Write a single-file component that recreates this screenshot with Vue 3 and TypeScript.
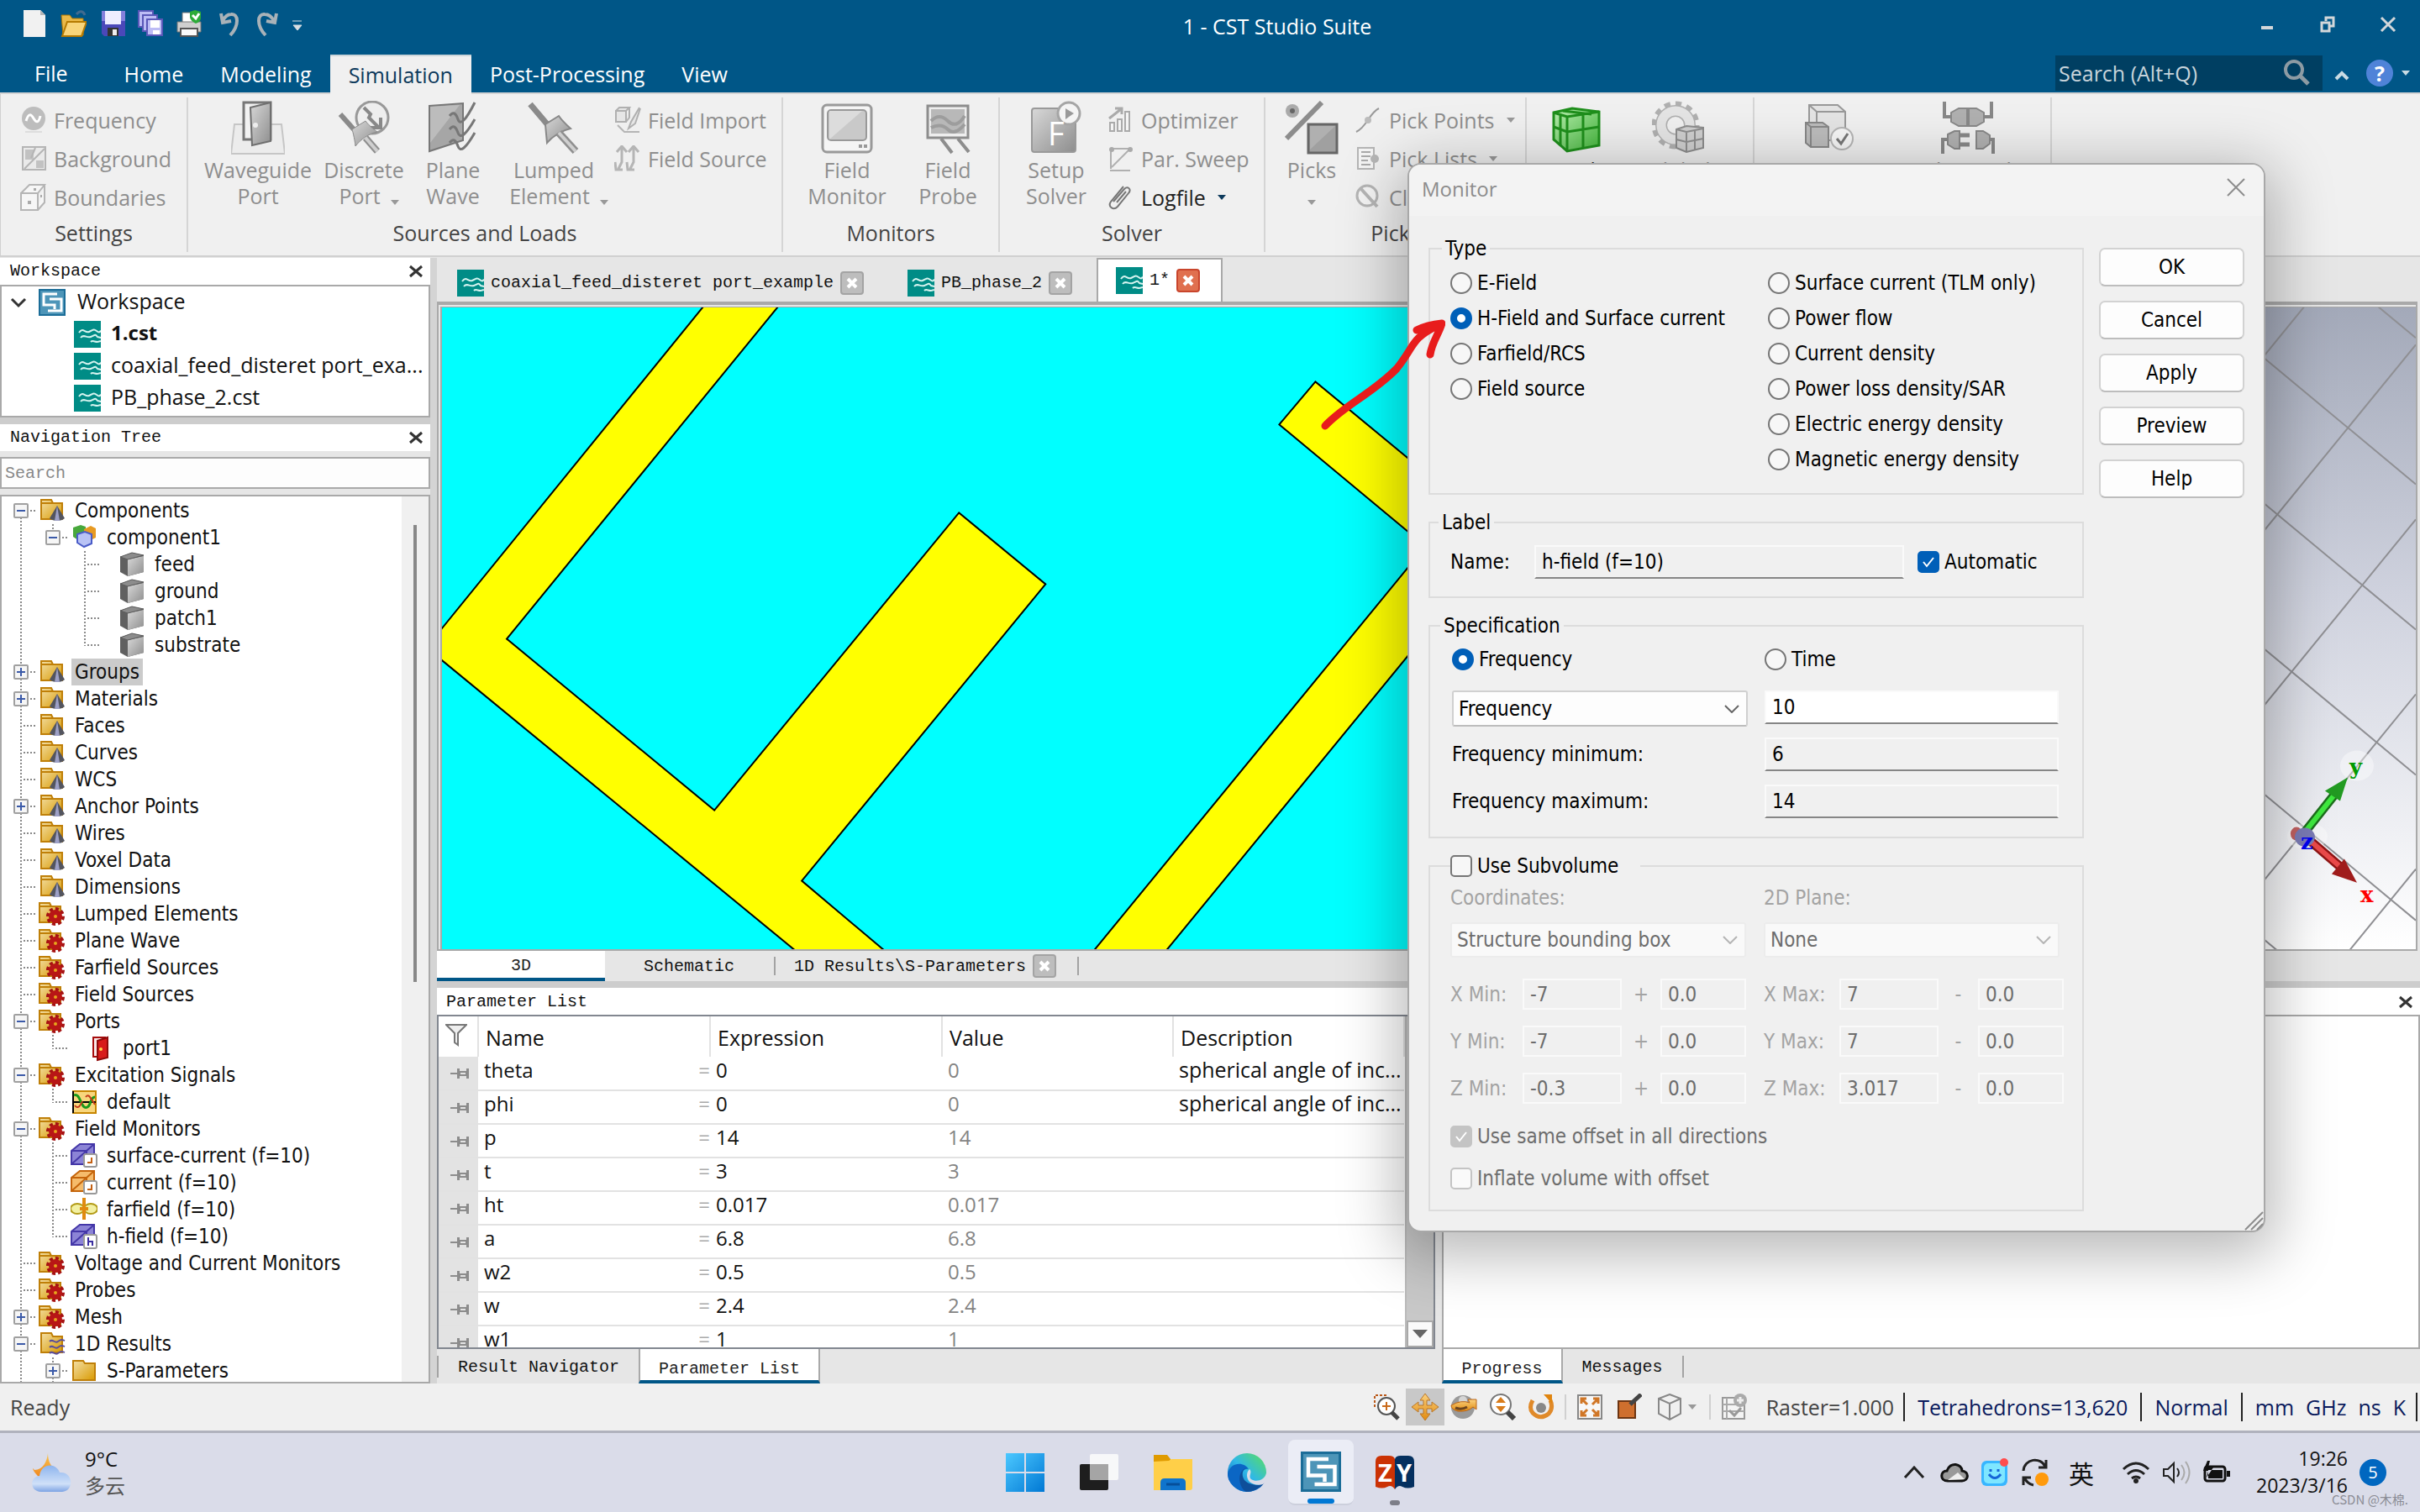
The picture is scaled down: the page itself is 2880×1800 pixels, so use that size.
<script setup lang="ts">
import { ref } from 'vue'

interface SmallItem { icon: string; text: string; on?: boolean; caret?: boolean }
interface BigItem { icon: string; lines: string[]; width: number; caret?: boolean; on?: boolean }
interface Group { name: string; width: number; pad: number; big: BigItem[]; small: SmallItem[] }
interface TreeRow { label: string; icon: string; cells: string[]; box?: '+' | '-'; leaf?: boolean; selected?: boolean }

const quick = ['q-new', 'q-open', 'q-save', 'q-saveall', 'q-print', 'q-undo', 'q-redo']
const tabs = ['File', 'Home', 'Modeling', 'Simulation', 'Post-Processing', 'View']

const groups: Group[] = [
  { name: 'Settings', width: 223, pad: 23, big: [], small: [
    { icon: 'r-freq', text: 'Frequency' }, { icon: 'r-back', text: 'Background' }, { icon: 'r-bound', text: 'Boundaries' }] },
  { name: 'Sources and Loads', width: 708, pad: 15, big: [
    { icon: 'r-wave', lines: ['Waveguide', 'Port'], width: 136 },
    { icon: 'r-disc', lines: ['Discrete', 'Port'], width: 116, caret: true },
    { icon: 'r-plane', lines: ['Plane', 'Wave'], width: 96 },
    { icon: 'r-lump', lines: ['Lumped', 'Element'], width: 144, caret: true }],
    small: [{ icon: 'r-fimp', text: 'Field Import' }, { icon: 'r-fsrc', text: 'Field Source' }] },
  { name: 'Monitors', width: 258, pad: 16, big: [
    { icon: 'r-fmon', lines: ['Field', 'Monitor'], width: 120 },
    { icon: 'r-fprobe', lines: ['Field', 'Probe'], width: 120 }], small: [] },
  { name: 'Solver', width: 316, pad: 6, big: [
    { icon: 'r-setup', lines: ['Setup', 'Solver'], width: 122 }],
    small: [{ icon: 'r-opt', text: 'Optimizer' }, { icon: 'r-sweep', text: 'Par. Sweep' }, { icon: 'r-log', text: 'Logfile', on: true, caret: true }] },
  { name: 'Picks', width: 311, pad: 3, big: [
    { icon: 'r-picks', lines: ['Picks', ''], width: 104, caret: true }],
    small: [{ icon: 'r-ppts', text: 'Pick Points', caret: true }, { icon: 'r-plist', text: 'Pick Lists', caret: true }, { icon: 'r-clear', text: 'Clear Picks' }] },
  { name: 'Mesh', width: 271, pad: 0, big: [
    { icon: 'r-mesh', lines: ['Mesh', 'View'], width: 118, on: true },
    { icon: 'r-global', lines: ['Global', 'Properties'], width: 126 }], small: [] },
  { name: 'Check', width: 354, pad: 8, big: [
    { icon: 'r-inter', lines: ['Intersection', 'Check'], width: 164 },
    { icon: 'r-elec', lines: ['Electrical', 'Connections'], width: 164 }], small: [] },
]

const files = [
  { name: '1.cst', current: true },
  { name: 'coaxial_feed_disteret port_exa...', current: false },
  { name: 'PB_phase_2.cst', current: false },
]

const tree: TreeRow[] = [
  { label: 'Components', icon: 't-cone', cells: ['first'], box: '-' },
  { label: 'component1', icon: 't-comp', cells: ['v', 'l'], box: '-' },
  { label: 'feed', icon: 't-solid', cells: ['v', '', 't'], leaf: true },
  { label: 'ground', icon: 't-solid', cells: ['v', '', 't'], leaf: true },
  { label: 'patch1', icon: 't-solid', cells: ['v', '', 't'], leaf: true },
  { label: 'substrate', icon: 't-solid', cells: ['v', '', 'l'], leaf: true },
  { label: 'Groups', icon: 't-cone', cells: ['t'], box: '+', selected: true },
  { label: 'Materials', icon: 't-cone', cells: ['t'], box: '+' },
  { label: 'Faces', icon: 't-cone', cells: ['t'] },
  { label: 'Curves', icon: 't-cone', cells: ['t'] },
  { label: 'WCS', icon: 't-cone', cells: ['t'] },
  { label: 'Anchor Points', icon: 't-cone', cells: ['t'], box: '+' },
  { label: 'Wires', icon: 't-cone', cells: ['t'] },
  { label: 'Voxel Data', icon: 't-cone', cells: ['t'] },
  { label: 'Dimensions', icon: 't-cone', cells: ['t'] },
  { label: 'Lumped Elements', icon: 't-gear', cells: ['t'] },
  { label: 'Plane Wave', icon: 't-gear', cells: ['t'] },
  { label: 'Farfield Sources', icon: 't-gear', cells: ['t'] },
  { label: 'Field Sources', icon: 't-gear', cells: ['t'] },
  { label: 'Ports', icon: 't-gear', cells: ['t'], box: '-' },
  { label: 'port1', icon: 't-port', cells: ['v', 'l'], leaf: true },
  { label: 'Excitation Signals', icon: 't-gear', cells: ['t'], box: '-' },
  { label: 'default', icon: 't-signal', cells: ['v', 'l'] },
  { label: 'Field Monitors', icon: 't-gear', cells: ['t'], box: '-' },
  { label: 'surface-current (f=10)', icon: 't-surf', cells: ['v', 't'] },
  { label: 'current (f=10)', icon: 't-curr', cells: ['v', 't'] },
  { label: 'farfield (f=10)', icon: 't-far', cells: ['v', 't'] },
  { label: 'h-field (f=10)', icon: 't-hf', cells: ['v', 'l'] },
  { label: 'Voltage and Current Monitors', icon: 't-gear', cells: ['t'] },
  { label: 'Probes', icon: 't-gear', cells: ['t'] },
  { label: 'Mesh', icon: 't-gear', cells: ['t'], box: '+' },
  { label: '1D Results', icon: 't-1d', cells: ['t'], box: '-' },
  { label: 'S-Parameters', icon: 't-folder', cells: ['v', 't'], box: '+' },
]

const docs = [
  { name: 'coaxial_feed_disteret port_example', active: false },
  { name: 'PB_phase_2', active: false },
  { name: '1*', active: true },
]

const params = [
  ['theta', '0', 'spherical angle of inc...'],
  ['phi', '0', 'spherical angle of inc...'],
  ['p', '14', ''],
  ['t', '3', ''],
  ['ht', '0.017', ''],
  ['a', '6.8', ''],
  ['w2', '0.5', ''],
  ['w', '2.4', ''],
  ['w1', '1', ''],
]

const leftTypes = ['E-Field', 'H-Field and Surface current', 'Farfield/RCS', 'Field source']
const rightTypes = ['Surface current (TLM only)', 'Power flow', 'Current density', 'Power loss density/SAR', 'Electric energy density', 'Magnetic energy density']
const monitorType = ref('H-Field and Surface current')
const domain = ref('Frequency')
const actions = ['OK', 'Cancel', 'Apply', 'Preview', 'Help']
const bounds = [
  { axis: 'X', min: '-7', max: '7' },
  { axis: 'Y', min: '-7', max: '7' },
  { axis: 'Z', min: '-0.3', max: '3.017' },
]

const fallLines = [253, 427, 600, 773, 946, 1119]
const riseLines = [421, 629, 837, 1045, 1253]
const statusTools = ['s-zoomrect', 's-pan', 's-rotate', 's-zoom', 's-spin', '|', 's-fit', 's-plane', 's-cube', '|', 's-sheet']
</script>

<template>
  <div class="app">
    <svg class="sprite" aria-hidden="true">
      <defs>
        <linearGradient id="gGray" x1="0" y1="0" x2="1" y2="1"><stop offset="0" stop-color="#d8d8d8" /><stop offset="1" stop-color="#8e8e8e" /></linearGradient>
        <linearGradient id="gFolder" x1="0" y1="0" x2="1" y2="1"><stop offset="0" stop-color="#f3dfa6" /><stop offset="1" stop-color="#d99a00" /></linearGradient>
        <linearGradient id="gGreen" x1="0" y1="0" x2="1" y2="1"><stop offset="0" stop-color="#b9eeb0" /><stop offset="1" stop-color="#43b53b" /></linearGradient>
        <linearGradient id="gOrange" x1="0" y1="0" x2="0" y2="1"><stop offset="0" stop-color="#fbd27f" /><stop offset="1" stop-color="#e08a10" /></linearGradient>
        <linearGradient id="gWin" x1="0" y1="0" x2="1" y2="1"><stop offset="0" stop-color="#4cc8ff" /><stop offset="1" stop-color="#0078d4" /></linearGradient>
        <linearGradient id="gEdge" x1="0" y1="1" x2="1" y2="0"><stop offset="0" stop-color="#0a5cb8" /><stop offset=".5" stop-color="#2fb8e8" /><stop offset="1" stop-color="#5be05a" /></linearGradient>
        <linearGradient id="gCloud" x1="0" y1="0" x2="0" y2="1"><stop offset="0" stop-color="#8db4ee" /><stop offset=".7" stop-color="#cfe0f8" /><stop offset="1" stop-color="#7ea4e4" /></linearGradient>
        <linearGradient id="gMoon" x1="0" y1="0" x2="0" y2="1"><stop offset="0" stop-color="#f9c64f" /><stop offset="1" stop-color="#ef7f1a" /></linearGradient>
        <linearGradient id="gSky" x1="0" y1="0" x2="0" y2="1"><stop offset="0" stop-color="#a3a9b9" /><stop offset=".45" stop-color="#cfd2de" /><stop offset="1" stop-color="#ffffff" /></linearGradient>
      </defs>
      <symbol id="q-new" viewBox="0 0 32 32"><path d="M3 0h20l6 6v26H3z" fill="#f1f1f1" /><path d="M23 0v6h6z" fill="#b5b5b5" /></symbol>
      <symbol id="q-open" viewBox="0 0 32 32"><path d="M2 6h10l3 4h13v20H4z" fill="#e9b949" stroke="#b57a00" /><path d="M9 14h23l-6 17H3z" fill="#f8d57a" stroke="#b57a00" stroke-width="2" /><path d="M20 5c4-5 8-4 10 1" fill="none" stroke="#426b8f" stroke-width="3" /></symbol>
      <symbol id="q-save" viewBox="0 0 32 32"><path d="M4 1h28v30H7l-3-3z" fill="#4b48b9" /><path d="M4 1h28v12H4z" fill="#8380dc" /><rect x="8" y="1" width="19" height="16" fill="#eef" /><rect x="11" y="21" width="13" height="10" fill="#333" /><rect x="17" y="23" width="5" height="7" fill="#eee" /></symbol>
      <symbol id="q-saveall" viewBox="0 0 32 32"><g fill="#bdbcf5" stroke="#5a57b8" stroke-width="2"><rect x="2" y="1" width="17" height="19" /><rect x="7" y="6" width="17" height="19" /><rect x="12" y="11" width="18" height="19" /></g><rect x="16" y="12" width="11" height="9" fill="#fff" /><rect x="19" y="24" width="8" height="5" fill="#fff" /></symbol>
      <symbol id="q-print" viewBox="0 0 32 32"><path d="M8 3h16v12H8z" fill="#fff" stroke="#777" /><path d="M2 14h28v12H2z" fill="#cfcfcf" stroke="#777" /><path d="M6 22h20v9H6z" fill="#fafafa" stroke="#555" stroke-width="2" /><path d="M17 2l6-2 7 2v7c0 4-3 6-6 7-4-2-7-5-7-8z" fill="#2cab38" /><path d="M20 6l4 4 4-6" fill="none" stroke="#fff" stroke-width="3" /></symbol>
      <symbol id="q-undo" viewBox="0 0 32 32"><path d="M19 30C30 18 29 4 20 5c-5 0-8 4-10 8M8 4l2 11 10-2" fill="none" stroke="#a9b2b8" stroke-width="4" /></symbol>
      <symbol id="q-redo" viewBox="0 0 32 32"><path d="M15 30C4 18 5 4 14 5c5 0 9 4 11 8M28 4l-2 11-10-2" fill="none" stroke="#a9b2b8" stroke-width="4" /></symbol>

      <symbol id="r-freq" viewBox="0 0 32 32"><circle cx="16" cy="14" r="14" fill="#bdbdbd" /><path d="M7 17c3-10 6-8 9-3s6 6 8-3" fill="none" stroke="#fff" stroke-width="3" /><rect x="6" y="29" width="20" height="2" fill="#ddd" /></symbol>
      <symbol id="r-back" viewBox="0 0 32 32"><rect x="3" y="2" width="27" height="27" fill="#eaeaea" stroke="#b5b5b5" stroke-width="2" /><path d="M6 5h10v12H6zM19 18h9v9h-9z" fill="#c2c2c2" /><path d="M5 28L29 4M18 3l-5 12" stroke="#b5b5b5" stroke-width="2" /></symbol>
      <symbol id="r-bound" viewBox="0 0 32 32"><path d="M1 11h20v20H1zM1 11L11 1h18l-8 10M21 31l8-9V1" fill="#f6f6f6" stroke="#b5b5b5" stroke-width="2" /><path d="M9 20h4v4H9zM16 5h3v3h-3zM24 13h2v3h-2z" fill="#aaa" /></symbol>
      <symbol id="r-wave" viewBox="0 0 64 64"><path d="M4 28h56l4 35H0z" fill="#ececec" stroke="#c6c6c6" stroke-width="2" /><path d="M15 2h32v44H15z" fill="#f2f2f2" stroke="#777" stroke-width="3" /><path d="M23 8l24-6v46l-22 5z" fill="url(#gGray)" stroke="#6f6f6f" stroke-width="2" /><circle cx="29" cy="29" r="3" fill="#eee" /></symbol>
      <symbol id="r-disc" viewBox="0 0 64 64"><circle cx="42" cy="20" r="19" fill="#eee" stroke="#999" stroke-width="3" /><path d="M32 8l8 8-2 4 12 12M52 20v12H40" fill="none" stroke="#888" stroke-width="4" /><path d="M4 16l16 18" stroke="#8a8a8a" stroke-width="6" /><path d="M22 54c-1-10-4-20-4-20l16-10c4 6 14 13 14 13-10 2-20 9-26 17z" fill="url(#gGray)" stroke="#8a8a8a" /><path d="M34 44l14 16" stroke="#8f8f8f" stroke-width="8" /><path d="M34 44l14 16" stroke="#cfcfcf" stroke-width="4" /></symbol>
      <symbol id="r-plane" viewBox="0 0 64 64"><path d="M4 6l40-3v44L4 60z" fill="#a6a6a6" stroke="#777" stroke-width="2" /><path d="M5 50L40 5 5 7z" fill="#bcbcbc" /><path d="M28 18q6-8 10 4t20-20M28 34q6-8 10 4t20-16M28 50q6-8 10 4t20-16" fill="none" stroke="#777" stroke-width="3" /></symbol>
      <symbol id="r-lump" viewBox="0 0 64 64"><path d="M4 4l22 26" stroke="#8a8a8a" stroke-width="7" /><path d="M24 50c-1-10-2-22-2-22l16-10c4 6 14 15 14 15-10 2-21 9-28 17z" fill="url(#gGray)" stroke="#888" stroke-width="2" /><path d="M38 38l20 22" stroke="#8f8f8f" stroke-width="9" /><path d="M38 38l20 22" stroke="#cfcfcf" stroke-width="4" /></symbol>
      <symbol id="r-fimp" viewBox="0 0 32 32"><path d="M2 5h12v13H2zM2 5l4-4h12l-4 4M18 1v12l-4 5M30 1L20 18l-3 8 8-6 6-18" fill="#e6e6e6" stroke="#b0b0b0" stroke-width="2" /><path d="M4 22l8 8h18" fill="none" stroke="#b5b5b5" stroke-width="2" /></symbol>
      <symbol id="r-fsrc" viewBox="0 0 32 32"><path d="M9 2v18l-4 8M3 8l6-7 6 7M1 20l1 9h8M23 2v18l-4 8M17 8l6-7 6 7M15 20l1 9h8" fill="none" stroke="#b5b5b5" stroke-width="3" /></symbol>
      <symbol id="r-fmon" viewBox="0 0 64 64"><rect x="3" y="5" width="58" height="56" rx="5" fill="#f5f5f5" stroke="#999" stroke-width="3" /><rect x="9" y="11" width="46" height="36" rx="4" fill="#c9c9c9" stroke="#999" stroke-width="2" /><path d="M11 46L50 12H11z" fill="#dcdcdc" /><path d="M46 52h4v4h-4zM52 52h4v4h-4z" fill="#999" /></symbol>
      <symbol id="r-fprobe" viewBox="0 0 64 64"><rect x="8" y="6" width="48" height="38" fill="#eee" stroke="#8d8d8d" stroke-width="3" /><rect x="12" y="10" width="40" height="29" fill="#b8b8b8" /><path d="M12 24q10-10 20 0t20-6M12 32q12-6 20 2t20-6" fill="none" stroke="#9d9d9d" stroke-width="4" /><path d="M24 45l13 17M44 45l13 16" stroke="#8d8d8d" stroke-width="4" /></symbol>
      <symbol id="r-setup" viewBox="0 0 64 64"><rect x="3" y="9" width="52" height="52" rx="3" fill="url(#gGray)" stroke="#999" stroke-width="2" /><circle cx="47" cy="15" r="13" fill="#f4f4f4" stroke="#a5a5a5" stroke-width="3" /><path d="M43 9l10 6-10 7z" fill="#999" /><text x="22" y="53" class="glyph-f">F</text></symbol>
      <symbol id="r-opt" viewBox="0 0 32 32"><path d="M3 19h5v10H3zM12 15h5v14h-5zM21 6h5v23h-5z" fill="#f4f4f4" stroke="#aaa" stroke-width="2" /><path d="M2 14L16 3M9 2h8v7" fill="none" stroke="#aaa" stroke-width="3" /></symbol>
      <symbol id="r-sweep" viewBox="0 0 32 32"><path d="M4 28V4h23L5 26M3 30h24" fill="none" stroke="#b0b0b0" stroke-width="2" /><circle cx="5" cy="5" r="3" fill="#aaa" /><circle cx="27" cy="5" r="3" fill="#aaa" /></symbol>
      <symbol id="r-log" viewBox="0 0 32 32"><path d="M7 21L20 6c4-4 9 0 5 5L12 27c-5 5-12 0-8-6L19 3M11 22L22 9" fill="none" stroke="#777" stroke-width="2" /></symbol>
      <symbol id="r-picks" viewBox="0 0 64 64"><circle cx="9" cy="12" r="8" fill="#aaa" /><circle cx="9" cy="12" r="3" fill="#666" /><path d="M2 45L44 2" stroke="#8d8d8d" stroke-width="6" /><rect x="28" y="28" width="34" height="34" fill="#a0a0a0" stroke="#666" stroke-width="3" /><path d="M30 58L60 30H30z" fill="#b0b0b0" /></symbol>
      <symbol id="r-ppts" viewBox="0 0 32 32"><path d="M1 30C14 24 16 8 28 2" fill="none" stroke="#999" stroke-width="2" /><circle cx="15" cy="16" r="4" fill="#bbb" /></symbol>
      <symbol id="r-plist" viewBox="0 0 32 32"><path d="M3 3h19v25H3z" fill="#f4f4f4" stroke="#b5b5b5" stroke-width="2" /><path d="M7 8h11M7 13h11M7 18h8M7 23h11" stroke="#aaa" stroke-width="2" /><circle cx="23" cy="16" r="5" fill="#b5b5b5" /></symbol>
      <symbol id="r-clear" viewBox="0 0 32 32"><circle cx="14" cy="14" r="12" fill="#f4f4f4" stroke="#b5b5b5" stroke-width="3" /><path d="M6 5l20 22" stroke="#b5b5b5" stroke-width="4" /></symbol>
      <symbol id="r-mesh" viewBox="0 0 64 64"><path d="M5 14l22-5 32 4v40l-38 7L5 46z" fill="url(#gGreen)" stroke="#1f8f1c" stroke-width="3" /><path d="M5 14l16 5 38-6M21 19v41M40 16v41M5 31l16 6 38-6M13 17v36M16 12l34 4" fill="none" stroke="#1f8f1c" stroke-width="3" /></symbol>
      <symbol id="r-global" viewBox="0 0 64 64"><circle cx="28" cy="29" r="25" fill="none" stroke="#b0b0b0" stroke-width="7" stroke-dasharray="7 6" /><circle cx="28" cy="29" r="17" fill="none" stroke="#b0b0b0" stroke-width="14" /><circle cx="28" cy="29" r="17" fill="none" stroke="#e4e4e4" stroke-width="11" /><path d="M29 34l12-4 20 2v24l-20 5-12-5z" fill="#cfcfcf" stroke="#8d8d8d" stroke-width="2" /><path d="M29 34l12 3 20-4M41 37v24M29 46l12 3 20-4M51 35v24" fill="none" stroke="#8d8d8d" stroke-width="2" /></symbol>
      <symbol id="r-inter" viewBox="0 0 64 64"><path d="M7 5h34l9 8v34H16L7 40z" fill="#e4e4e4" stroke="#999" stroke-width="2" /><path d="M7 5l9 8h34M16 13v12" fill="none" stroke="#999" stroke-width="2" /><path d="M3 26h20l7 5v24H9l-6-5z" fill="#bcbcbc" stroke="#888" stroke-width="2" /><path d="M3 26l6 5h21M9 31v24" fill="none" stroke="#888" stroke-width="2" /><circle cx="46" cy="45" r="13" fill="#f6f6f6" stroke="#b5b5b5" stroke-width="2" /><path d="M40 45l5 6 8-12" fill="none" stroke="#777" stroke-width="3" /></symbol>
      <symbol id="r-elec" viewBox="0 0 64 64"><path d="M4 1v18h10M60 1v18H50M2 63V46h8M62 63V46H54" fill="none" stroke="#888" stroke-width="4" /><path d="M12 14l9-5h10v21H21l-9-5zM33 9h9l9 5v11l-9 5h-9zM8 40l8-4h6v21h-6l-8-5zM42 36h8l8 5v10l-8 6h-8z" fill="#b0b0b0" stroke="#888" stroke-width="2" /><path d="M23 41h11M23 52h11" stroke="#888" stroke-width="5" /></symbol>

      <symbol id="cstfile" viewBox="0 0 32 32"><rect width="32" height="32" fill="#008c86" /><path d="M6 14c5-7 7 1 12-1s5-4 9-1 3 1 5 0M8 20c4-5 7 1 12-1s5-4 8 0l4 1M20 25c3-3 6 2 12-1" fill="none" stroke="#d6f4f0" stroke-width="2" /></symbol>
      <symbol id="cstlogo" viewBox="0 0 32 32"><rect x="1" y="1" width="30" height="30" fill="#4d95b8" stroke="#1b6d98" stroke-width="2" /><path d="M22 6H6v13h13v5M13 12h14v14H11" fill="none" stroke="#fff" stroke-width="3" /></symbol>

      <symbol id="t-folder" viewBox="0 0 32 32"><path d="M3 4h12l2 3h12v20H3z" fill="url(#gFolder)" stroke="#bf7f08" stroke-width="2" /></symbol>
      <symbol id="t-cone" viewBox="0 0 32 32"><path d="M3 3h12l2 4h11v19H3z" fill="url(#gFolder)" stroke="#bf7f08" stroke-width="2" /><path d="M3 7h14" stroke="#bf7f08" stroke-width="2" /><path d="M22 10l9 15c-4 4-14 4-18 0z" fill="#53555f" /><path d="M22 10l3 18h-6z" fill="#9da0c6" /></symbol>
      <symbol id="t-gear" viewBox="0 0 32 32"><path d="M1 3h12l2 4h11v19H1z" fill="url(#gFolder)" stroke="#bf7f08" stroke-width="2" /><path d="M1 7h14" stroke="#bf7f08" stroke-width="2" /><circle cx="20" cy="19" r="9" fill="none" stroke="#a51212" stroke-width="4" stroke-dasharray="4 3" /><circle cx="20" cy="19" r="5" fill="#e8a51c" stroke="#b81616" stroke-width="6" /></symbol>
      <symbol id="t-comp" viewBox="0 0 32 32"><path d="M3 4l9-3 6 2v12l-9 4-6-4z" fill="#48a83c" /><path d="M16 6l8-4 6 3v11l-8 4-6-3z" fill="#e79a22" /><path d="M8 12l9-3 8 3v11l-9 4-8-5z" fill="#b9c3f5" stroke="#4a5cc8" stroke-width="2" /></symbol>
      <symbol id="t-solid" viewBox="0 0 32 32"><path d="M2 7l14-5 14 3v20l-19 5-9-5z" fill="#606060" /><path d="M11 10l19-4v19l-19 5z" fill="url(#gGray)" /><path d="M2 7l14-5 14 3-19 5z" fill="#8c8c8c" stroke="#5c5c5c" /></symbol>
      <symbol id="t-port" viewBox="0 0 32 32"><path d="M8 3h14v23H8z" fill="#fbe9e9" stroke="#a60d0d" stroke-width="2" /><path d="M13 7l12-4v24l-12 3z" fill="#d81b1b" stroke="#8f0a0a" stroke-width="2" /><circle cx="17" cy="17" r="2" fill="#ffd24a" /></symbol>
      <symbol id="t-signal" viewBox="0 0 32 32"><rect x="3" y="3" width="27" height="26" fill="#f8d67c" stroke="#c78600" stroke-width="2" /><path d="M3 3v26M3 16h27" stroke="#000" stroke-width="2" /><path d="M4 8c8-4 8 18 16 14 5-3 3-12 9-12" fill="none" stroke="#1a9a1a" stroke-width="3" /><path d="M5 20c4 5 7 0 9-5M18 10c4-5 6 2 11 9" fill="none" stroke="#c23a1a" stroke-width="2" /></symbol>
      <symbol id="t-surf" viewBox="0 0 32 32"><path d="M1 10l10-8h17v17l-9 7H1z" fill="#8c84d6" stroke="#4437a8" stroke-width="2" /><path d="M1 10h18v16M19 10l9-8M1 26l27-24" fill="none" stroke="#4437a8" stroke-width="2" /><rect x="16" y="14" width="15" height="15" rx="2" fill="#fff" stroke="#999" stroke-width="2" /><path d="M20 24h5v-6" fill="none" stroke="#c46114" stroke-width="2" /></symbol>
      <symbol id="t-curr" viewBox="0 0 32 32"><path d="M1 10l10-8h17v17l-9 7H1z" fill="#f5bb6b" stroke="#c5640a" stroke-width="2" /><path d="M1 10h18v16M19 10l9-8M1 26l27-24" fill="none" stroke="#c5640a" stroke-width="2" /><rect x="16" y="14" width="15" height="15" rx="2" fill="#fff" stroke="#999" stroke-width="2" /><path d="M20 24h5v-6" fill="none" stroke="#c46114" stroke-width="2" /></symbol>
      <symbol id="t-far" viewBox="0 0 32 32"><ellipse cx="8" cy="15" rx="8" ry="6" fill="#f2f0a2" stroke="#b39b16" stroke-width="2" /><ellipse cx="24" cy="15" rx="8" ry="6" fill="#f2f0a2" stroke="#b39b16" stroke-width="2" /><path d="M16 2v26M11 15h10" stroke="#e08a10" stroke-width="4" /></symbol>
      <symbol id="t-hf" viewBox="0 0 32 32"><path d="M1 10l10-8h17v17l-9 7H1z" fill="#8c84d6" stroke="#4437a8" stroke-width="2" /><path d="M1 10h18v16M19 10l9-8M1 26l27-24" fill="none" stroke="#4437a8" stroke-width="2" /><rect x="16" y="14" width="15" height="16" rx="2" fill="#fff" stroke="#999" stroke-width="2" /><path d="M21 17v10M21 22h5v5" fill="none" stroke="#3b2ea0" stroke-width="2" /></symbol>
      <symbol id="t-1d" viewBox="0 0 32 32"><path d="M3 3h12l2 4h11v19H3z" fill="url(#gFolder)" stroke="#bf7f08" stroke-width="2" /><path d="M13 13c4-4 6 3 10 0s5-2 8-1M13 20c4-4 6 3 10 0s5-2 8-1M13 27c4-4 6 3 10 0s5-2 8-1" fill="none" stroke="#5b4d99" stroke-width="2" /></symbol>

      <symbol id="s-zoomrect" viewBox="0 0 32 32"><path d="M2 16V2h16" fill="none" stroke="#b9591a" stroke-width="2" stroke-dasharray="3 2" /><circle cx="16" cy="15" r="10" fill="#fff" stroke="#555" stroke-width="2" /><path d="M16 10v10M11 15h10" stroke="#c96a1a" stroke-width="2" /><path d="M22 22l8 8" stroke="#444" stroke-width="5" /></symbol>
      <symbol id="s-pan" viewBox="0 0 32 32"><path d="M16 0l6 8h-4v6h6v-4l8 6-8 6v-4h-6v6h4l-6 8-6-8h4v-6H8v4l-8-6 8-6v4h6V8h-4z" fill="url(#gOrange)" stroke="#b9772a" /></symbol>
      <symbol id="s-rotate" viewBox="0 0 32 32"><circle cx="15" cy="16" r="14" fill="#9a9a9a" /><circle cx="15" cy="8" r="5" fill="#d5d5d5" /><path d="M1 14q12-7 22-3l-2-4h10v12l-4-3q-6 6-18 5Q1 19 1 14z" fill="url(#gOrange)" stroke="#b9641a" /><path d="M6 17q7 3 14-1" stroke="#6b4420" stroke-width="3" fill="none" /></symbol>
      <symbol id="s-zoom" viewBox="0 0 32 32"><circle cx="14" cy="13" r="12" fill="#fff" stroke="#777" stroke-width="2" /><path d="M14 4l6 7H8zM14 22l6-7H8z" fill="#d97c1a" /><path d="M22 22l8 8" stroke="#444" stroke-width="6" /></symbol>
      <symbol id="s-spin" viewBox="0 0 32 32"><circle cx="16" cy="17" r="6" fill="#888" /><path d="M6 8q-5 9 0 15 9 9 19 1 6-7 2-16" fill="none" stroke="#e08a2a" stroke-width="5" /><path d="M19 1h10v11z" fill="#e0850f" /></symbol>
      <symbol id="s-fit" viewBox="0 0 32 32"><rect x="2" y="2" width="28" height="28" fill="#f7f7f7" stroke="#888" stroke-width="2" /><path d="M6 12V6h6M20 6h6v6M26 20v6h-6M12 26H6v-6M6 6l7 7M26 6l-7 7M26 26l-7-7M6 26l7-7" fill="none" stroke="#d07626" stroke-width="3" /></symbol>
      <symbol id="s-plane" viewBox="0 0 32 32"><path d="M4 9h20v20H4z" fill="#cf6f2e" stroke="#6d3512" stroke-width="2" /><path d="M18 13L31 1" stroke="#444" stroke-width="5" /></symbol>
      <symbol id="s-cube" viewBox="0 0 32 32"><path d="M16 1l13 5v18l-13 7-13-7V6zM3 6l13 6 13-6M16 12v19" fill="none" stroke="#888" stroke-width="2" /></symbol>
      <symbol id="s-sheet" viewBox="0 0 32 32"><path d="M2 5h26v25H2z" fill="#f4f4f4" stroke="#999" stroke-width="2" /><path d="M7 5v25M2 13h26M2 21h26" stroke="#aaa" stroke-width="2" /><circle cx="23" cy="8" r="8" fill="#aaa" /><path d="M23 4v8M19 8h8" stroke="#eee" stroke-width="3" /><path d="M10 20l6 6 8-9" fill="none" stroke="#999" stroke-width="3" /></symbol>
    </svg>

    <header class="titlebar">
      <div class="title-row">
        <div class="quick">
          <button v-for="q in quick" :key="q" class="plain" :aria-label="q.slice(2)"><svg class="i32"><use :href="'#' + q" /></svg></button>
          <button class="plain more" aria-label="Customize"><svg width="12" height="14"><path d="M0 1h11M1 6h10l-5 6z" fill="#d8dee2" stroke="#d8dee2" /></svg></button>
        </div>
        <h1>1 - CST Studio Suite</h1>
        <div class="win-buttons">
          <button class="plain" aria-label="Minimize"><svg width="20" height="20"><path d="M3 14h14" stroke="#d3d7da" stroke-width="4" /></svg></button>
          <button class="plain" aria-label="Restore"><svg width="20" height="20"><path d="M8 6V2h9v10h-4M3 8h9v10H3z" fill="none" stroke="#d3d7da" stroke-width="3" /></svg></button>
          <button class="plain" aria-label="Close"><svg width="20" height="20"><path d="M2 2l16 16M18 2L2 18" stroke="#d3d7da" stroke-width="3" /></svg></button>
        </div>
      </div>
      <nav class="tab-row">
        <button v-for="t in tabs" :key="t" class="plain tab" :class="{ active: t === 'Simulation', file: t === 'File' }">{{ t }}</button>
        <span class="grow"></span>
        <label class="search">
          <input type="text" placeholder="Search (Alt+Q)" aria-label="Search" />
          <svg width="32" height="32"><circle cx="12" cy="12" r="10" fill="none" stroke="#8e9ba3" stroke-width="4" /><path d="M19 19l10 10" stroke="#8e9ba3" stroke-width="5" /></svg>
        </label>
        <button class="plain up" aria-label="Collapse ribbon"><svg width="18" height="14"><path d="M2 11l7-7 7 7" fill="none" stroke="#c9dbe4" stroke-width="4" /></svg></button>
        <button class="plain help">?</button>
        <i class="caret light"></i>
      </nav>
    </header>

    <section class="ribbon">
      <div v-for="g in groups" :key="g.name" class="group" :style="{ width: g.width + 'px' }">
        <div class="group-body" :style="{ paddingLeft: g.pad + 'px' }">
          <button v-for="b in g.big" :key="b.icon" class="plain big" :class="{ on: b.on }" :style="{ width: b.width + 'px' }">
            <svg class="i64"><use :href="'#' + b.icon" /></svg>
            <span>{{ b.lines[0] }}</span>
            <span>{{ b.lines[1] }}<i v-if="b.caret" class="caret" :class="{ solo: !b.lines[1] }"></i></span>
          </button>
          <div v-if="g.small.length" class="smalls">
            <button v-for="s in g.small" :key="s.text" class="plain small" :class="{ on: s.on }">
              <svg class="i32"><use :href="'#' + s.icon" /></svg>{{ s.text }}<i v-if="s.caret" class="caret"></i>
            </button>
          </div>
        </div>
        <div class="group-name">{{ g.name }}</div>
      </div>
    </section>

    <main class="work">
      <aside class="side">
        <h2 class="dock-title">Workspace <button class="plain x" aria-label="Close panel"><svg width="16" height="16"><path d="M1 2l14 12M15 2L1 14" stroke="#333" stroke-width="3" /></svg></button></h2>
        <ul class="workspace">
          <li class="root">
            <svg width="20" height="14"><path d="M2 3l8 8 8-8" fill="none" stroke="#333" stroke-width="3" /></svg>
            <svg class="i32"><use href="#cstlogo" /></svg><span>Workspace</span>
          </li>
          <li v-for="f in files" :key="f.name" :class="{ bold: f.current }"><svg class="i32"><use href="#cstfile" /></svg><span>{{ f.name }}</span></li>
        </ul>
        <div class="split"></div>
        <h2 class="dock-title">Navigation Tree <button class="plain x" aria-label="Close panel"><svg width="16" height="16"><path d="M1 2l14 12M15 2L1 14" stroke="#333" stroke-width="3" /></svg></button></h2>
        <input class="tree-search" type="text" placeholder="Search" aria-label="Search tree" />
        <div class="tree-box">
          <ul class="tree">
            <li v-for="r in tree" :key="r.label">
              <span v-for="(c, i) in r.cells" :key="i" class="cell" :class="c">
                <b v-if="r.box && i === r.cells.length - 1" class="box" :class="{ plus: r.box === '+' }"></b>
              </span>
              <svg class="i32" :class="{ leaf: r.leaf }"><use :href="'#' + r.icon" /></svg>
              <span class="label" :class="{ selected: r.selected }">{{ r.label }}</span>
            </li>
          </ul>
          <div class="tree-scroll"><i></i></div>
        </div>
      </aside>

      <section class="center">
        <div class="doc-tabs">
          <div v-for="d in docs" :key="d.name" class="doc" :class="{ active: d.active }">
            <svg class="i32"><use href="#cstfile" /></svg><span>{{ d.name }}</span>
            <button class="close" :class="{ red: d.active }" aria-label="Close tab"><svg width="14" height="14"><path d="M2 2l10 10M12 2L2 12" stroke="#fff" stroke-width="4" /></svg></button>
          </div>
        </div>
        <div class="viewport">
          <svg viewBox="526 365 2348 765" preserveAspectRatio="xMidYMid slice">
            <rect x="526" y="365" width="2348" height="765" fill="url(#gSky)" />
            <g stroke="#8f8f93" stroke-width="2">
              <line v-for="y in fallLines" :key="'f' + y" x1="2600" :y1="y - 79" x2="2874" :y2="y + 149" />
              <line v-for="y in riseLines" :key="'r' + y" x1="2600" :y1="y + 117" x2="2874" :y2="y - 219" />
            </g>
            <rect x="526" y="365" width="1674" height="765" fill="#00ffff" />
            <g fill="#ffff00" stroke="#000" stroke-width="2">
              <path d="M839 362H928L603 760L850 964L1141 610L1244 695L954 1048L1056 1134H950L524 784V750Z" />
              <path d="M1790 640L1565 454L1522 505L1790 728" />
              <path d="M1299 1134L1790 535V640L1385 1134Z" />
            </g>
            <ellipse cx="2745" cy="995" rx="24" ry="16" fill="#fff" opacity=".4" />
            <ellipse cx="2804" cy="911" rx="20" ry="18" fill="#fff" opacity=".4" />
            <path d="M2742 990L2780 942" stroke="#1c6e1c" stroke-width="11" />
            <path d="M2742 990L2780 942" stroke="#3fe83f" stroke-width="6" />
            <path d="M2793 925L2766 941L2784 953Z" fill="#229a22" />
            <path d="M2748 1000L2785 1032" stroke="#8f1414" stroke-width="11" />
            <path d="M2748 1000L2785 1032" stroke="#ea4a4a" stroke-width="6" />
            <path d="M2804 1050L2789 1022L2774 1040Z" fill="#a01c1c" />
            <ellipse cx="2732" cy="992" rx="7" ry="8" fill="#c06060" />
            <ellipse cx="2742" cy="996" rx="12" ry="11" fill="#7a7ab4" />
            <text x="2795" y="921" class="axis" fill="#009a00">y</text>
            <text x="2737" y="1010" class="axis" fill="#0000f0">z</text>
            <text x="2808" y="1073" class="axis" fill="#ff0000">x</text>
          </svg>
        </div>
        <div class="view-tabs">
          <button class="plain on">3D</button><button class="plain schematic">Schematic</button><i class="bar"></i><button class="plain">1D Results\S-Parameters</button>
          <button class="close" aria-label="Close tab"><svg width="14" height="14"><path d="M2 2l10 10M12 2L2 12" stroke="#fff" stroke-width="4" /></svg></button><i class="bar"></i>
        </div>
        <div class="split"></div>
        <div class="docks">
          <section class="dock params">
            <h2 class="dock-title">Parameter List</h2>
            <div class="table-box">
              <table>
                <colgroup><col class="c0" /><col class="c1" /><col class="c2" /><col class="c3" /><col /></colgroup>
                <thead><tr>
                  <th><svg width="26" height="28"><path d="M1 2h24l-10 10v14l-4-3V12z" fill="#eee" stroke="#777" stroke-width="2" /></svg></th>
                  <th>Name</th><th>Expression</th><th>Value</th><th>Description</th>
                </tr></thead>
                <tbody>
                  <tr v-for="p in params" :key="p[0]">
                    <td class="pin"><svg width="24" height="16"><path d="M0 8h8" stroke="#8c8c8c" stroke-width="2" /><path d="M8 2h3v3h8V2h3v12h-3v-3h-8v3H8z" fill="#8c8c8c" /><path d="M12 8h6" stroke="#e3e3e3" stroke-width="2" /></svg></td>
                    <td><div class="name">{{ p[0] }}<em>=</em></div></td><td>{{ p[1] }}</td><td class="dim">{{ p[1] }}</td><td class="desc">{{ p[2] }}</td>
                  </tr>
                </tbody>
              </table>
              <div class="table-scroll"><button class="plain" aria-label="Scroll down"><i class="caret"></i></button></div>
            </div>
            <div class="dock-tabs"><i class="bar"></i><button class="plain">Result Navigator</button><button class="plain on">Parameter List</button></div>
          </section>
          <section class="dock">
            <h2 class="dock-title"><span class="grow"></span><button class="plain x" aria-label="Close panel"><svg width="16" height="16"><path d="M1 2l14 12M15 2L1 14" stroke="#333" stroke-width="3" /></svg></button></h2>
            <div class="messages"></div>
            <div class="dock-tabs"><button class="plain on">Progress</button><button class="plain">Messages</button><i class="bar"></i></div>
          </section>
        </div>
      </section>
    </main>

    <footer class="status">
      <span class="ready">Ready</span>
      <template v-for="(s, i) in statusTools" :key="i">
        <i v-if="s === '|'" class="tool-sep"></i>
        <button v-else class="plain tool" :class="{ active: s === 's-pan', wide: s === 's-cube' }" :aria-label="s.slice(2)"><svg class="i32"><use :href="'#' + s" /></svg><i v-if="s === 's-cube'" class="caret"></i></button>
      </template>
      <span class="seg raster">Raster=1.000</span>
      <span class="seg">Tetrahedrons=13,620</span>
      <span class="seg">Normal</span>
      <span class="seg units"><span>mm</span><span>GHz</span><span>ns</span><span>K</span></span>
    </footer>

    <div class="taskbar">
      <div class="weather">
        <svg width="50" height="50" viewBox="0 0 50 50"><path d="M20 2c0 10 4 18 12 20L14 34C4 28-1 16 4 22 14 22 19 12 20 2z" fill="url(#gMoon)" /><path d="M12 48c-14 0-14-18-2-19 2-16 20-16 24-4 16-2 18 22 3 23z" fill="url(#gCloud)" /></svg>
        <div><p>9°C</p><p class="grey">多云</p></div>
      </div>
      <div class="apps">
        <button class="plain" aria-label="Start"><svg class="i48" viewBox="0 0 48 48"><path d="M1 1h22v22H1zM25 1h22v22H25zM1 25h22v22H1zM25 25h22v22H25z" fill="url(#gWin)" /></svg></button>
        <button class="plain" aria-label="Task view"><svg class="i48" viewBox="0 0 48 48"><rect x="1" y="14" width="34" height="31" rx="2" fill="#1e1e1e" /><rect x="13" y="2" width="34" height="31" rx="2" fill="#fafafa" opacity=".92" /><path d="M13 14h22v19H13z" fill="#8f8f8f" opacity=".75" /></svg></button>
        <button class="plain" aria-label="Explorer"><svg class="i48" viewBox="0 0 48 48"><path d="M1 3h16l4 5v8H1z" fill="#e09b00" /><path d="M1 11l18-1 3-2h25v34a3 3 0 0 1-3 3H1z" fill="#ffcf48" /><path d="M9 45V36q0-5 5-5h20q5 0 5 5v9z" fill="#0f74cc" /><path d="M16 38h16" stroke="#064f9a" stroke-width="3" /></svg></button>
        <button class="plain" aria-label="Edge"><svg class="i48" viewBox="0 0 48 48"><circle cx="24" cy="24" r="23" fill="url(#gEdge)" /><path d="M1 25C4 12 20 10 26 20c-9-2-13 12-2 18 6 4 14 3 20-1-8 12-26 13-35 4C2 35 1 30 1 25z" fill="#0b66c4" /><path d="M24 18c-7 2-8 15 3 19 8 3 14 2 18-1-5 6-13 11-22 11-8-4-13-24 1-29z" fill="#0e4f9a" /><path d="M27 20c4 4-2 8 2 12 6 4 16 1 18-7l2 8-6 5c-6 2-12 0-16-3-4-5-4-11 0-15z" fill="#dadce9" /></svg></button>
        <button class="plain running" aria-label="CST Studio Suite"><svg class="i48"><use href="#cstlogo" /></svg></button>
        <button class="plain dot" aria-label="ZY"><svg class="i48" viewBox="0 0 48 48"><path d="M1 11q0-7 7-7h9q6 0 7 4v36q-4-6-9-3-6 3-14 0z" fill="#cb3204" /><path d="M47 11q0-7-7-7h-9q-6 0-7 4v36q4-6 9-3 6 3 14 0z" fill="#04305f" /><text x="4" y="35" class="zy">Z</text><text x="26" y="35" class="zy">Y</text></svg></button>
      </div>
      <div class="tray">
        <span><svg width="26" height="16"><path d="M2 14L13 2l11 12" fill="none" stroke="#222" stroke-width="3" /></svg></span>
        <span><svg width="34" height="24"><path d="M9 22C-1 22 0 10 8 10 12-2 26 2 26 10c9 1 8 12 0 12z" fill="#999" stroke="#111" stroke-width="3" /><path d="M9 21l12-9 8 8z" fill="#eee" /></svg></span>
        <span><svg width="34" height="34"><rect x="1" y="3" width="31" height="30" rx="6" fill="#38b6ff" /><rect x="4" y="6" width="25" height="24" rx="5" fill="#7ee6ff" /><path d="M10 19q7 9 14 0M12 13v3M21 13v3" fill="none" stroke="#1565d8" stroke-width="3" /><circle cx="28" cy="5" r="5" fill="#ff4c4c" /></svg></span>
        <span><svg width="34" height="34"><path d="M3 15C4 0 24-2 29 10M30 2v9h-9M15 32C9 31 6 27 4 23M3 32v-9h9" fill="none" stroke="#222" stroke-width="3" /><circle cx="25" cy="25" r="8" fill="#ff9a0c" /></svg></span>
        <span class="ime">英</span>
        <span><svg width="34" height="28"><path d="M2 10q15-14 30 0M7 16q10-9 20 0M12 21q5-4 10 0" fill="none" stroke="#222" stroke-width="3" /><circle cx="17" cy="24" r="3" fill="#222" /></svg></span>
        <span><svg width="34" height="28"><path d="M2 10h5l7-7v22l-7-7H2z" fill="none" stroke="#222" stroke-width="2" /><path d="M18 9q4 5 0 10" fill="none" stroke="#222" stroke-width="2" /><path d="M23 5q7 9 0 18M28 1q9 13 0 26" fill="none" stroke="#aaa" stroke-width="2" /></svg></span>
        <span><svg width="34" height="28"><rect x="3" y="7" width="24" height="17" rx="3" fill="none" stroke="#111" stroke-width="3" /><path d="M7 11h17v10H7zM29 12h4v7h-4zM6 0L1 12h6l-2 8 8-12H7l2-8z" fill="#111" /></svg></span>
        <div class="clock"><p>19:26</p><p>2023/3/16</p></div>
        <b class="badge">5</b>
      </div>
      <small class="mark">CSDN @木棉.</small>
    </div>

    <form class="dialog" role="dialog" aria-label="Monitor" @submit.prevent>
      <div class="dlg-title"><span>Monitor</span><button type="button" class="plain" aria-label="Close"><svg width="22" height="22"><path d="M1 1l20 20M21 1L1 21" stroke="#8c8c8c" stroke-width="2" /></svg></button></div>
      <div class="dlg-body">
        <div class="dlg-main">
          <fieldset class="types">
            <legend>Type</legend>
            <div class="type-col"><label v-for="t in leftTypes" :key="t"><input v-model="monitorType" type="radio" name="type" :value="t" />{{ t }}</label></div>
            <div class="type-col"><label v-for="t in rightTypes" :key="t"><input v-model="monitorType" type="radio" name="type" :value="t" />{{ t }}</label></div>
          </fieldset>
          <fieldset class="lab">
            <legend>Label</legend>
            <label for="mon-name">Name:</label><input id="mon-name" type="text" value="h-field (f=10)" readonly />
            <label class="auto"><input type="checkbox" checked />Automatic</label>
          </fieldset>
          <fieldset class="spec">
            <legend>Specification</legend>
            <label class="radio-l"><input v-model="domain" type="radio" name="domain" value="Frequency" />Frequency</label>
            <label><input v-model="domain" type="radio" name="domain" value="Time" />Time</label>
            <select aria-label="Frequency kind"><option>Frequency</option></select>
            <input type="text" value="10" aria-label="Frequency" class="white" />
            <label for="fmin">Frequency minimum:</label><input id="fmin" type="text" value="6" readonly />
            <label for="fmax">Frequency maximum:</label><input id="fmax" type="text" value="14" readonly />
          </fieldset>
          <fieldset class="sub">
            <legend><label><input type="checkbox" />Use Subvolume</label></legend>
            <div class="sub-grid">
              <label for="coords" class="off">Coordinates:</label><label for="plane" class="off">2D Plane:</label>
              <select id="coords" disabled><option>Structure bounding box</option></select>
              <select id="plane" disabled><option>None</option></select>
            </div>
            <div v-for="b in bounds" :key="b.axis" class="bound">
              <label :for="b.axis + 'min'" class="off">{{ b.axis }} Min:</label><input :id="b.axis + 'min'" type="text" :value="b.min" disabled /><span class="off">+</span><input type="text" value="0.0" disabled :aria-label="b.axis + ' min offset'" />
              <label :for="b.axis + 'max'" class="off">{{ b.axis }} Max:</label><input :id="b.axis + 'max'" type="text" :value="b.max" disabled /><span class="off">-</span><input type="text" value="0.0" disabled :aria-label="b.axis + ' max offset'" />
            </div>
            <label class="line dis"><input type="checkbox" checked disabled />Use same offset in all directions</label>
            <label class="line dis"><input type="checkbox" disabled />Inflate volume with offset</label>
          </fieldset>
        </div>
        <div class="dlg-actions"><button v-for="a in actions" :key="a" type="button">{{ a }}</button></div>
      </div>
      <svg class="grip" width="24" height="24"><path d="M2 23L23 2M9 23L23 9M16 23l7-7" stroke="#8c8c8c" stroke-width="2" /></svg>
    </form>

    <svg class="pen" width="160" height="140" viewBox="0 0 160 140" aria-hidden="true">
      <path d="M17 133C40 108 74 94 102 65C124 38 118 30 150 14M126 19C136 14 146 12 156 11C152 24 144 34 142 48" fill="none" stroke="#e81c1c" stroke-width="9" stroke-linecap="round" stroke-linejoin="round" />
    </svg>
  </div>
</template>

<style>
body { margin: 0; }
</style>

<style scoped>
* { box-sizing: border-box; }
.app { position: relative; display: flex; flex-direction: column; height: 100vh; overflow: hidden; background: #e6e6e6; font-family: "Open Sans", "Noto Sans CJK SC", sans-serif; font-size: 25px; line-height: 32px; color: #111; }
.sprite { position: absolute; width: 0; height: 0; }
.plain { border: 0; background: none; padding: 0; margin: 0; font: inherit; color: inherit; }
h1, h2, p, ul { margin: 0; padding: 0; list-style: none; font-weight: 400; font-size: inherit; }
.i32 { width: 32px; height: 32px; flex: none; }
.i48 { width: 48px; height: 48px; }
.i64 { width: 64px; height: 64px; flex: none; }
.grow { flex: 1; }
.glyph-f { font: 38px "Open Sans", sans-serif; fill: #fff; }
.axis { font: bold 26px "DejaVu Serif", serif; }
.zy { font: bold 29px "Open Sans", sans-serif; fill: #fff; }
.caret { display: inline-block; border: 5px solid transparent; border-top: 6px solid #999; border-bottom: 0; }
.caret.light { border-top-color: #c9dbe4; margin: 0 12px 0 10px; }

.titlebar { background: #005687; color: #fff; flex: none; }
.title-row { display: flex; height: 64px; align-items: flex-start; }
.quick { display: flex; width: 370px; padding: 12px 0 0 25px; gap: 14px; }
.quick .plain { height: 32px; }
.quick .more { width: 14px; }
.title-row h1 { flex: 1; text-align: center; padding-top: 15px; }
.win-buttons { display: flex; width: 210px; gap: 52px; padding: 13px 0 0 18px; }
.tab-row { display: flex; height: 46px; align-items: center; }
.tab { height: 46px; padding: 2px 22px 0; }
.tab.file { padding: 0 45px 0 41px; }
.tab.active { height: 47px; background: #f0f0f0; border-top: 2px solid #ccd5da; color: #0d3a5c; position: relative; top: 1px; padding-top: 0; }
.search { display: flex; align-items: center; width: 318px; height: 42px; background: #003f62; padding: 0 14px 0 4px; }
.search input { flex: 1; min-width: 0; border: 0; background: none; padding: 0; font: inherit; color: #fff; outline: 0; }
.search input::placeholder { color: #c8d4db; opacity: 1; }
.up { width: 46px; }
.help { width: 32px; height: 32px; margin-left: 6px; border-radius: 50%; background: #4f83d8; font-weight: 700; }

.ribbon { display: flex; flex: none; height: 196px; background: #f0f0f0; border-top: 2px solid #d5d5d5; border-bottom: 2px solid #d0d0d0; border-left: 1px solid #d0d0d0; overflow: hidden; }
.group { flex: none; display: flex; flex-direction: column; margin: 4px 0; border-right: 2px solid #d5d5d5; }
.group-body { display: flex; flex: 1; padding-top: 4px; color: #8e8e8e; }
.group-name { text-align: center; color: #444; padding-bottom: 7px; white-space: nowrap; }
.big { display: flex; flex-direction: column; align-items: center; line-height: 31px; }
.big .i64 { margin-bottom: 3px; }
.big .caret { margin: 0 -12px 0 12px; vertical-align: -1px; }
.big .caret.solo { margin: 0; }
.on { color: #222; }
.smalls { display: flex; flex-direction: column; }
.small { display: flex; align-items: center; height: 46px; gap: 8px; white-space: nowrap; }
.small .caret { margin-left: 6px; }
.small.on .caret { border-top-color: #0d3a5c; }

.work { display: flex; flex: 1; min-height: 0; padding-top: 1px; }
.side { display: flex; flex-direction: column; width: 512px; flex: none; }
.dock-title { display: flex; justify-content: space-between; align-items: center; flex: none; height: 32px; padding: 0 9px 0 12px; background: #fff; font-family: "Liberation Mono", monospace; font-size: 20px; }
.docks .dock-title { padding-top: 2px; }
.x { display: flex; }
.workspace { height: 158px; flex: none; border: 2px solid #a9a9a9; background: #fff; }
.workspace li { display: flex; align-items: center; height: 38px; padding-left: 86px; gap: 12px; white-space: nowrap; }
.workspace .root { padding-left: 10px; gap: 14px; }
.workspace span { padding-bottom: 5px; }
.workspace .bold { font-weight: 700; font-size: 24px; }
.split { height: 8px; flex: none; background: #cdcdcd; }
.tree-search { margin: 7px 0; height: 38px; flex: none; padding: 0 4px; border: 2px solid #a9a9a9; background: #fdfdfd; font: 20px "Liberation Mono", monospace; }
.tree-search::placeholder { color: #888; opacity: 1; }
.tree-box { display: flex; flex: 1; min-height: 0; border: 2px solid #a9a9a9; background: #fff; overflow: hidden; }
.tree { flex: 1; font-family: "DejaVu Sans Condensed", "DejaVu Sans", sans-serif; font-size: 24px; padding: 1px 0 0 4px; }
.tree li { display: flex; align-items: center; height: 32px; white-space: nowrap; }
.tree .i32 { margin: 0 7px 0 2px; }
.tree .i32.leaf { margin-left: 21px; }
.tree .label { padding: 0 4px; }
.tree .selected { background: #cbcbcb; }
.cell { display: flex; align-items: center; justify-content: center; width: 38px; height: 32px; flex: none; background-repeat: no-repeat; }
.cell.v, .cell.t, .cell.l, .cell.first {
  --dv: repeating-linear-gradient(#8a8a8a 0 2px, #fff 2px 4px);
  --dh: repeating-linear-gradient(90deg, #8a8a8a 0 2px, #fff 2px 4px);
}
.cell.v { background-image: var(--dv); background-size: 2px 32px; background-position: 18px 0; }
.cell.t { background-image: var(--dv), var(--dh); background-size: 2px 32px, 20px 2px; background-position: 18px 0, 18px 15px; }
.cell.l { background-image: var(--dv), var(--dh); background-size: 2px 16px, 20px 2px; background-position: 18px 0, 18px 15px; }
.cell.first { background-image: var(--dv), var(--dh); background-size: 2px 16px, 20px 2px; background-position: 18px 16px, 18px 15px; }
.box { width: 18px; height: 18px; border: 2px solid #a0a0a0; border-radius: 2px; background: linear-gradient(#3b5aa8, #3b5aa8) center / 10px 2px no-repeat, #f6f6f6; }
.box.plus { background: linear-gradient(#3b5aa8, #3b5aa8) center / 10px 2px no-repeat, linear-gradient(#3b5aa8, #3b5aa8) center / 2px 10px no-repeat, #f6f6f6; }
.tree-scroll { width: 32px; background: #f0f0f0; padding: 34px 0 0 14px; }
.tree-scroll i { display: block; width: 4px; height: 544px; background: #888; }

.center { display: flex; flex-direction: column; flex: 1; min-width: 0; border-left: 8px solid #d4d4d4; font-family: "Liberation Mono", monospace; font-size: 20px; }
.doc-tabs { display: flex; height: 52px; flex: none; padding-left: 1px; gap: 2px; }
.doc { display: flex; align-items: center; gap: 8px; padding: 8px 27px 0 23px; }
.doc.active { background: #fff; border: 2px solid #a9a9a9; border-bottom: 0; padding: 0 25px 0 21px; }
.close { display: flex; align-items: center; justify-content: center; width: 28px; height: 28px; padding: 0; border: 2px solid #a3a3a3; border-radius: 4px; background: #bdbdbd; }
.close.red { background: #e0704f; border-color: #c9452c; }
.viewport { flex: 1; min-height: 0; margin-right: 3px; border: 2px solid #a9a9a9; border-top-width: 4px; padding: 2px 0 0 2px; }
.viewport svg { display: block; width: 100%; height: 100%; border: 2px solid #a9a9a9; border-width: 1px 0 0 2px; }
.view-tabs { display: flex; align-items: center; height: 36px; flex: none; }
.view-tabs .plain { padding-top: 2px; }
.view-tabs .on { width: 200px; height: 36px; background: #fff; border-bottom: 4px solid #005687; }
.view-tabs .schematic { padding-left: 46px; padding-right: 47px; }
.bar { width: 2px; height: 22px; margin: 0 22px 0 0; background: #a3a3a3; }
.view-tabs .close { margin: 0 25px 0 8px; }
.docks { display: flex; height: 471px; flex: none; gap: 8px; }
.dock { display: flex; flex-direction: column; flex: 1164 1 0; min-width: 0; }
.dock.params { flex-grow: 1187; }
.dock.params .dock-title { padding-left: 11px; }
.table-box { display: flex; flex: 1; min-height: 0; border: 2px solid #828790; overflow: hidden; background: #fff; font-family: "Open Sans", sans-serif; font-size: 24px; }
table { flex: 1; width: 0; height: 0; table-layout: fixed; border-collapse: collapse; }
.c0 { width: 47px; } .c1 { width: 276px; } .c2 { width: 276px; } .c3 { width: 275px; }
th { height: 48px; padding: 2px 0 0 8px; text-align: left; font-weight: 400; font-size: 25px; border-right: 2px solid #e2e2e2; }
td { height: 40px; padding: 0 0 9px 7px; line-height: 29px; border-bottom: 2px solid #e2e2e2; white-space: nowrap; }
td.desc { font-size: 25px; }
td.pin { background: #e3e3e3; padding: 0 0 2px 14px; }
td.dim { color: #848484; }
.name { display: flex; justify-content: space-between; }
em { font-style: normal; color: #aaa; }
.table-scroll { display: flex; width: 34px; background: #c8c8c8; border-left: 2px solid #bbb; align-items: flex-end; }
.table-scroll .plain { width: 100%; height: 32px; background: #fafafa; border: 2px solid #a9a9a9; display: flex; align-items: center; justify-content: center; }
.table-scroll .caret { border: 9px solid transparent; border-top: 10px solid #666; border-bottom: 0; }
.messages { flex: 1; background: #fff; border: 2px solid #a9a9a9; }
.dock-tabs { display: flex; align-items: center; height: 41px; flex: none; }
.dock-tabs .plain { height: 41px; padding: 3px 23px 0; }
.dock-tabs .on { background: #fff; border-right: 2px solid #a9a9a9; border-left: 2px solid #a9a9a9; border-bottom: 4px solid #005687; padding: 8px 22px 0; }
.dock-tabs .bar { height: 26px; margin: 0; }

.status { display: flex; align-items: center; height: 59px; flex: none; background: #f0f0f0; border-bottom: 3px solid #b0b2bd; }
.ready { flex: 1; padding-left: 12px; color: #444; }
.tool { display: flex; align-items: center; justify-content: center; width: 46px; height: 44px; }
.tool.wide { width: 68px; gap: 6px; }
.tool.active { background: #c8c8c8; }
.tool-sep { width: 2px; height: 30px; margin: 0 5px; background: #d0d0d0; }
.seg { display: flex; align-items: center; height: 34px; padding: 0 15px; border-right: 2px solid #222; color: #0a1a5c; }
.raster { color: #444; padding-right: 11px; }
.units { gap: 14px; margin-right: 3px; padding-right: 12px; }

.taskbar { position: relative; display: grid; grid-template-columns: 1fr auto 1fr; align-items: center; height: 94px; flex: none; background: #dadce9; font-family: "Noto Sans CJK SC", sans-serif; font-size: 24px; }
.weather { display: flex; align-items: center; gap: 14px; padding-left: 37px; font-family: "Open Sans", "Noto Sans CJK SC", sans-serif; }
.grey { color: #555; }
.apps { display: flex; }
.apps .plain { display: flex; align-items: center; justify-content: center; width: 78px; height: 78px; margin: 0 5px; border-radius: 8px; position: relative; }
.apps .running { background: #ebedf6; border-bottom: 2px solid #cccfdc; }
.apps .running::after, .apps .dot::after { content: ""; position: absolute; bottom: 0; width: 32px; height: 6px; border-radius: 3px; background: #0078d4; }
.apps .dot::after { width: 12px; background: #7d7e88; }
.tray { display: flex; align-items: center; justify-content: flex-end; padding-right: 40px; }
.tray span { display: flex; width: 48px; justify-content: center; }
.tray .ime { width: 62px; margin-right: 10px; font-size: 30px; }
.clock { width: 132px; padding-bottom: 2px; text-align: right; font-family: "Open Sans", sans-serif; font-size: 23px; }
.badge { width: 32px; height: 32px; margin-left: 14px; border-radius: 50%; background: #0067c0; color: #fff; text-align: center; font: 20px/32px "Open Sans", sans-serif; }
.mark { position: absolute; right: 14px; bottom: 4px; font-size: 15px; line-height: 22px; color: #8b8c95; }

.dialog { position: absolute; left: 1675px; top: 194px; width: 1021px; border: 2px solid #a8a8a8; border-radius: 16px; background: #f0f0f0; overflow: visible; box-shadow: 0 16px 70px 12px rgba(0, 0, 0, .28); font-family: "DejaVu Sans Condensed", "DejaVu Sans", sans-serif; font-size: 24px; line-height: 28px; color: #000; }
.dlg-title { display: flex; justify-content: space-between; align-items: center; height: 61px; padding: 0 22px 3px 15px; border-radius: 14px 14px 0 0; background: #f3f3f3; color: #8c8c8c; font-family: "Open Sans", sans-serif; font-size: 24px; }
.dlg-body { display: flex; gap: 18px; padding: 25px 0 23px 23px; }
.dlg-main { width: 780px; }
fieldset { margin: 0 0 19px; min-width: 0; border: 2px solid #dcdcdc; }
legend { padding: 0 4px; margin: 0; }
label { display: flex; align-items: center; white-space: nowrap; }
.types { display: flex; height: 307px; padding: 6px 0 0 24px; }
.types legend { margin-left: -10px; }
.type-col { width: 378px; flex: none; }
.type-col + .type-col { width: 340px; }
.type-col label { height: 42px; }
input[type="radio"], input[type="checkbox"] { appearance: none; flex: none; width: 26px; height: 26px; margin: 0 6px 0 0; border: 2px solid #767676; border-radius: 50%; background: #f7f7f7; }
input[type="checkbox"] { border-radius: 5px; }
input[type="radio"]:checked { border: 8px solid #005fb8; background: #fff; }
input[type="checkbox"]:checked { border-color: #005fb8; background: #005fb8 url("data:image/svg+xml,%3Csvg xmlns='http://www.w3.org/2000/svg' viewBox='0 0 22 22'%3E%3Cpath d='M5 11l4 5 8-10' fill='none' stroke='white' stroke-width='2'/%3E%3C/svg%3E") center / 22px; }
input[type="checkbox"]:disabled { border-color: #c4c4c4; background-color: #fafafa; }
input[type="checkbox"]:disabled:checked { background-color: #c4c4c4; }
.dialog input[type="text"] { width: 100%; height: 40px; padding: 0 7px; border: 2px solid #fafafa; border-bottom: 2px solid #868686; background: #f0f0f0; color: #000; outline: 0; border-radius: 0; font: inherit; }
.dialog input[type="text"].white { background: #fff; }
.dialog input[type="text"]:disabled { height: 37px; border-bottom-color: #fafafa; color: #6d6d6d; }
select { appearance: none; height: 43px; padding: 0 6px; border: 2px solid #d0d0d0; border-bottom-color: #bdbdbd; border-radius: 3px; color: #000; font: inherit; background: #fdfdfd url("data:image/svg+xml,%3Csvg xmlns='http://www.w3.org/2000/svg' viewBox='0 0 18 10'%3E%3Cpath d='M1 1l8 8 8-8' fill='none' stroke='%23666' stroke-width='2'/%3E%3C/svg%3E") right 8px center / 18px 10px no-repeat; }
select:disabled { opacity: 1; color: #6d6d6d; border-color: #ececec; height: 42px; background: #f9f9f9 url("data:image/svg+xml,%3Csvg xmlns='http://www.w3.org/2000/svg' viewBox='0 0 18 10'%3E%3Cpath d='M1 1l8 8 8-8' fill='none' stroke='%23b5b5b5' stroke-width='2'/%3E%3C/svg%3E") right 8px center / 18px 10px no-repeat; }
.lab { display: flex; align-items: center; height: 104px; padding: 0 24px 8px; }
.lab legend, .spec legend { margin-left: -14px; }
.lab label { width: 100px; }
.lab input[type="text"] { width: 440px; margin-right: 16px; }
.lab .auto { width: auto; }
.spec { display: grid; grid-template-columns: 352px 350px; column-gap: 20px; row-gap: 16px; align-content: start; height: 267px; padding: 12px 26px 0 26px; }
.spec label { height: 40px; }
.spec .radio-l, .spec .radio-l + label { height: 27px; margin-bottom: 8px; }
.spec select { width: 352px; height: 43px; margin-bottom: -3px; }
.sub { height: 425px; margin: 0; padding: 10px 0 0 24px; }
.sub legend { margin-left: 0; padding: 0 26px 0 0; }
.sub-grid { display: grid; grid-template-columns: 352px 352px; column-gap: 21px; row-gap: 15px; margin-bottom: 25px; }
.off { color: #a3a3a3; }
.dis { color: #6d6d6d; }
.bound { display: grid; grid-template-columns: 86px 118px 46px 102px 21px 90px 118px 47px 102px; margin-bottom: 19px; align-items: center; }
.bound span { text-align: center; }
.bound label:nth-of-type(2) { grid-column: 6; }
.line { height: 27px; margin-top: 23px; }
.bound + .line { margin-top: 25px; }
.dlg-actions { display: flex; flex-direction: column; gap: 17px; width: 173px; padding-top: 13px; }
.dlg-actions button { height: 46px; border: 2px solid #d2d2d2; border-bottom-color: #bdbdbd; border-radius: 7px; background: #fdfdfd; font: inherit; color: #000; }
.grip { position: absolute; right: 0; bottom: 0; }
.pen { position: absolute; left: 1560px; top: 374px; }
</style>
